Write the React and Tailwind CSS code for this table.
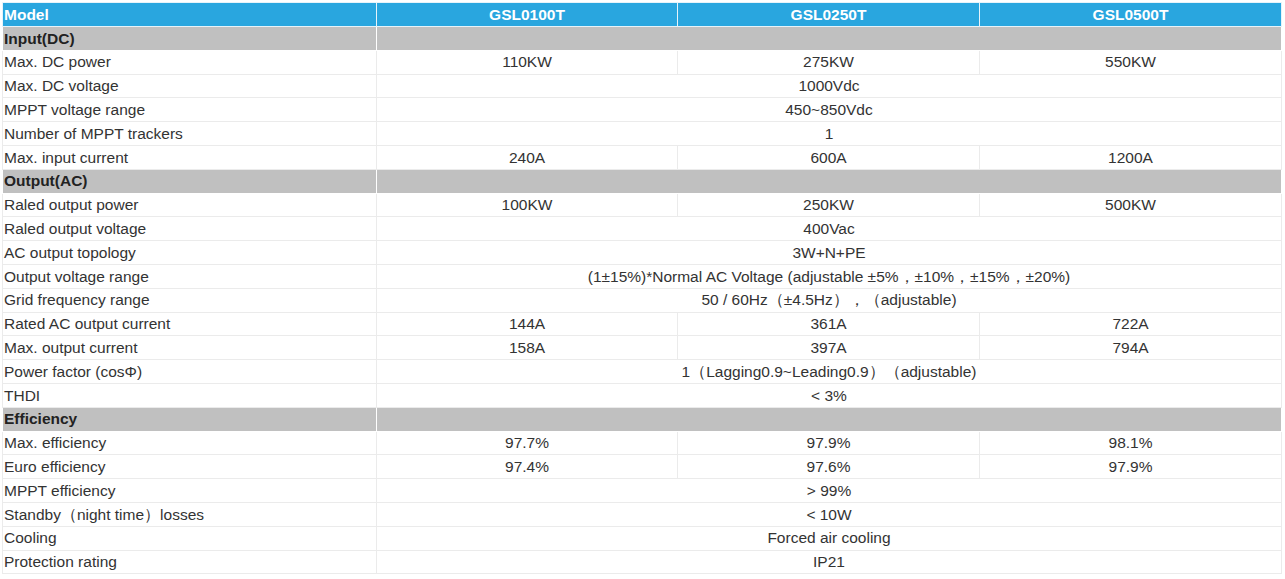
import React from "react";

// spec rows: [label, values] — one value means it spans the three model columns
const sections = [
  {
    title: "Input(DC)",
    rows: [
      ["Max. DC power", ["110KW", "275KW", "550KW"]],
      ["Max. DC voltage", ["1000Vdc"]],
      ["MPPT voltage range", ["450~850Vdc"]],
      ["Number of MPPT trackers", ["1"]],
      ["Max. input current", ["240A", "600A", "1200A"]],
    ],
  },
  {
    title: "Output(AC)",
    rows: [
      ["Raled output power", ["100KW", "250KW", "500KW"]],
      ["Raled output voltage", ["400Vac"]],
      ["AC output topology", ["3W+N+PE"]],
      ["Output voltage range", ["(1±15%)*Normal AC Voltage (adjustable ±5%，±10%，±15%，±20%)"]],
      ["Grid frequency range", ["50 / 60Hz（±4.5Hz），（adjustable)"]],
      ["Rated AC output current", ["144A", "361A", "722A"]],
      ["Max. output current", ["158A", "397A", "794A"]],
      ["Power factor (cosΦ)", ["1（Lagging0.9~Leading0.9）（adjustable)"]],
      ["THDI", ["< 3%"]],
    ],
  },
  {
    title: "Efficiency",
    rows: [
      ["Max. efficiency", ["97.7%", "97.9%", "98.1%"]],
      ["Euro efficiency", ["97.4%", "97.6%", "97.9%"]],
      ["MPPT efficiency", ["> 99%"]],
      ["Standby（night time）losses", ["< 10W"]],
      ["Cooling", ["Forced air cooling"]],
      ["Protection rating", ["IP21"]],
    ],
  },
];

const models = ["GSL0100T", "GSL0250T", "GSL0500T"];

export default function App() {
  return (
    <div
      className="bg-white w-[1285px] h-[579px] pt-[2px] pl-[2px]"
      style={{ fontFamily: '"Liberation Sans", Arial, sans-serif' }}
    >
      <table className="table-fixed border-collapse w-[1279px] text-[15.5px] text-[#333] leading-none">
        <colgroup>
          <col className="w-[374px]" />
          <col className="w-[301px]" />
          <col className="w-[302px]" />
          <col className="w-[302px]" />
        </colgroup>
        <thead>
          <tr className="h-[24px] bg-[#29a6df] text-white font-bold">
            <th className="border border-[#e6f3fa] text-left pl-[1px] font-bold">Model</th>
            {models.map((m) => (
              <th key={m} className="border border-[#e6f3fa] text-center font-bold">
                {m}
              </th>
            ))}
          </tr>
        </thead>
        <tbody>
          {sections.map((s) => (
            <React.Fragment key={s.title}>
              <tr className="h-[23.8px] bg-[#c0c0c0] font-bold text-[#222]">
                <td className="border border-white pl-[1px]">{s.title}</td>
                <td colSpan={3} className="border border-white"></td>
              </tr>
              {s.rows.map(([label, vals]) => (
                <tr key={label} className="h-[23.8px]">
                  <td className="border border-[#ebebeb] pl-[1px] whitespace-nowrap">{label}</td>
                  {vals.length === 1 ? (
                    <td colSpan={3} className="border border-[#ebebeb] text-center whitespace-nowrap">
                      {vals[0]}
                    </td>
                  ) : (
                    vals.map((v, i) => (
                      <td key={i} className="border border-[#ebebeb] text-center">
                        {v}
                      </td>
                    ))
                  )}
                </tr>
              ))}
            </React.Fragment>
          ))}
        </tbody>
      </table>
    </div>
  );
}
